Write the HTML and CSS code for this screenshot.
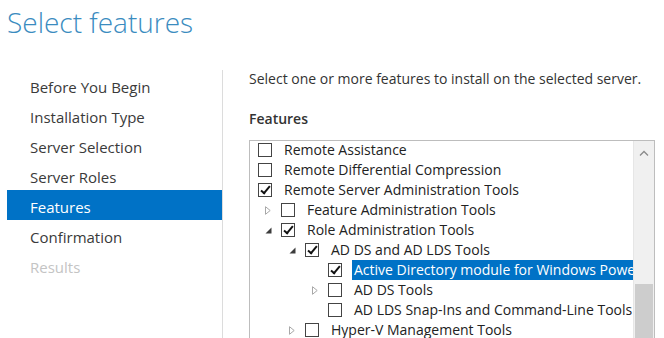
FILE: index.html
```html
<!DOCTYPE html>
<html lang="en">
<head>
  <meta charset="UTF-8">
  <title>Add Roles and Features Wizard</title>
  <link rel="stylesheet" href="styles.css">
</head>
<body>
  <h1 class="page-title">Select features</h1>
  <div class="wizard">
    <ul class="steps">
      <li class="step">Before You Begin</li>
      <li class="step">Installation Type</li>
      <li class="step">Server Selection</li>
      <li class="step">Server Roles</li>
      <li class="step active">Features</li>
      <li class="step">Confirmation</li>
      <li class="step disabled">Results</li>
    </ul>
    <div class="content">
      <p class="intro">Select one or more features to install on the selected server.</p>
      <div class="section-label">Features</div>
      <div class="listbox">
        <div class="tree">
          <div class="rows">
            <div class="row lvl0"><span class="cb"></span><span class="label">Remote Assistance</span></div>
            <div class="row lvl0"><span class="cb"></span><span class="label">Remote Differential Compression</span></div>
            <div class="row lvl0"><span class="cb on"></span><span class="label">Remote Server Administration Tools</span></div>
            <div class="row lvl1">
              <span class="exp"><svg viewBox="0 0 6 9" width="6" height="9"><path d="M.5 .7 5.2 4.5 .5 8.3z" fill="#fff" stroke="#a8a8a8"/></svg></span>
              <span class="cb"></span><span class="label">Feature Administration Tools</span>
            </div>
            <div class="row lvl1">
              <span class="exp"><svg viewBox="0 0 7 7" width="7" height="7"><path d="M6.5 .5V6.5H.5z" fill="#3c3c3c"/></svg></span>
              <span class="cb on"></span><span class="label">Role Administration Tools</span>
            </div>
            <div class="row lvl2">
              <span class="exp"><svg viewBox="0 0 7 7" width="7" height="7"><path d="M6.5 .5V6.5H.5z" fill="#3c3c3c"/></svg></span>
              <span class="cb on"></span><span class="label">AD DS and AD LDS Tools</span>
            </div>
            <div class="row lvl3 selected"><span class="cb on"></span><span class="label">Active Directory module for Windows PowerShell</span></div>
            <div class="row lvl3">
              <span class="exp"><svg viewBox="0 0 6 9" width="6" height="9"><path d="M.5 .7 5.2 4.5 .5 8.3z" fill="#fff" stroke="#a8a8a8"/></svg></span>
              <span class="cb"></span><span class="label">AD DS Tools</span>
            </div>
            <div class="row lvl3"><span class="cb"></span><span class="label">AD LDS Snap-Ins and Command-Line Tools</span></div>
            <div class="row lvl2">
              <span class="exp"><svg viewBox="0 0 6 9" width="6" height="9"><path d="M.5 .7 5.2 4.5 .5 8.3z" fill="#fff" stroke="#a8a8a8"/></svg></span>
              <span class="cb"></span><span class="label">Hyper-V Management Tools</span>
            </div>
          </div>
        </div>
        <div class="scrollbar">
          <div class="sb-arrow">
            <svg viewBox="0 0 10 6" width="10" height="6"><path d="M1 5.5 5 1.5 9 5.5" fill="none" stroke="#8a8a8a" stroke-width="1.3"/></svg>
          </div>
          <div class="sb-track"></div>
          <div class="sb-thumb"></div>
        </div>
      </div>
    </div>
  </div>
</body>
</html>
```

FILE: styles.css
```css
:root {
  --title: #3b8cbf;
  --text: #2b2b2b;
  --accent: #0072c6;
  --muted: #c4c4c4;
  --divider: #dcdcdc;
  --box-border: #bdbdbd;
}
html, body { height: 100%; }
body {
  margin: 0;
  background: #fff;
  color: var(--text);
  font-family: "Open Sans", "Noto Sans", Arial, sans-serif;
  overflow: hidden;
}
.page-title {
  margin: 0; padding: 2px 0 0 7px;
  height: 68px; line-height: 40px;
  font-size: 28px; font-weight: 300;
  color: var(--title);
}
.wizard { display: flex; height: calc(100% - 70px); }

/* left step list */
.steps {
  list-style: none; margin: 0; padding: 0 0 0 7px;
  width: 215px; flex: none;
  border-right: 1px solid var(--divider);
}
.step {
  height: 28px; line-height: 30px;
  padding: 2px 0 0 23px;
  font-size: 15px;
  color: #3a3a3a;
}
.step.active { background: var(--accent); color: #fff; }
.step.disabled { color: var(--muted); }

/* right pane */
.content { flex: 1; min-width: 0; padding: 0 9px 0 26px; }
.intro { margin: 0; height: 40px; line-height: 18px; font-size: 14px; color: #333; }
.section-label { height: 30px; line-height: 18px; font-size: 14px; font-weight: 600; color: #333; }

.listbox {
  display: flex;
  height: 220px;
  border: 1px solid var(--box-border);
}
.tree { flex: 1; min-width: 0; overflow: hidden; padding-top: 5px; }
.rows { margin-top: -6px; }
.row {
  display: flex; align-items: center;
  height: 20px;
  font-size: 14px;
  white-space: nowrap;
  color: #222;
}
.row.lvl0 { padding-left: 8px; }
.row.lvl1 { padding-left: 31px; }
.row.lvl2 { padding-left: 55px; }
.row.lvl3 { padding-left: 78px; }

.exp {
  width: 17px; height: 20px; margin-left: -17px;
  display: flex; align-items: center;
  padding-left: 1px; box-sizing: border-box;
}
.exp svg { display: block; }

.cb {
  width: 12px; height: 12px;
  border: 1px solid #444;
  background: #fff;
  flex: none;
  position: relative;
}
.cb.on::after {
  content: "";
  position: absolute; left: 4px; top: 0px;
  width: 3px; height: 8px;
  border: solid #111; border-width: 0 2px 2px 0;
  transform: rotate(40deg);
}
.label { margin-left: 10px; padding: 0 2px; line-height: 20px; }
.row.selected .label { background: var(--accent); color: #fff; flex: 1; overflow: hidden; }

.scrollbar {
  width: 20px; flex: none;
  background: #f0f0f0;
  display: flex; flex-direction: column;
  border-left: 1px solid #e6e6e6;
}
.sb-arrow { height: 20px; display: flex; align-items: center; justify-content: center; padding-top: 2px; }
.sb-track { height: 121px; }
.sb-thumb { flex: 1; margin: 0 1px; background: #cdcdcd; }
```
